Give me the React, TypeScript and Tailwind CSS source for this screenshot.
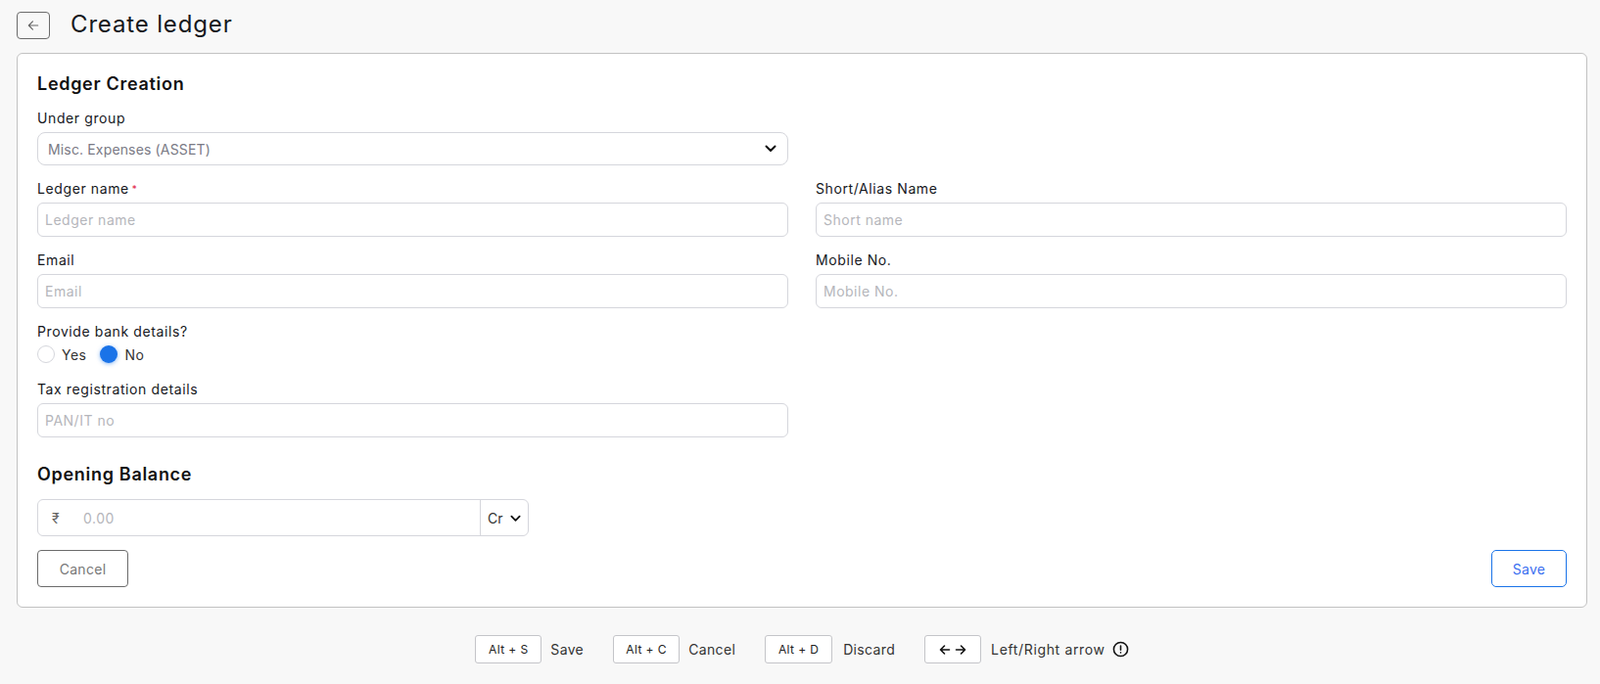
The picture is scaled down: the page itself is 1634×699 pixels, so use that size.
import React from "react";

const F = "font-['Inter','Liberation_Sans',sans-serif]";

function Label({ children, req }: { children: React.ReactNode; req?: boolean }) {
  return (
    <div className="flex h-[20px] text-[14px] leading-[20px] tracking-[0.6px] text-[#16181d]">
      {children}
      {req && <span className="ml-[3px] text-[10px] text-[#e11d48]">*</span>}
    </div>
  );
}

function Field({ label, ph, req }: { label: string; ph: string; req?: boolean }) {
  return (
    <div className="flex flex-col gap-[4px]">
      <Label req={req}>{label}</Label>
      <input
        readOnly
        placeholder={ph}
        className="h-[35px] w-full rounded-[6px] border border-[#d5d6dc] bg-white px-[7px] text-[14px] tracking-[0.5px] outline-none placeholder:text-[#b5b6bb]"
      />
    </div>
  );
}

function Chevron({ className }: { className: string }) {
  return (
    <svg viewBox="0 0 12 8" className={className} fill="none" stroke="#111" strokeWidth="2" strokeLinecap="round" strokeLinejoin="round">
      <path d="M1.5 1.5 6 6l4.5-4.5" />
    </svg>
  );
}

function Key({ k, w, label, gap }: { k: React.ReactNode; w: string; label: string; gap: string }) {
  return (
    <div className={`flex items-center ${gap}`}>
      <div className={`${w} flex h-[29px] items-center justify-center rounded-[3px] border border-[#c4c5c9] bg-white text-[12px] tracking-[0.4px] text-[#222]`}>{k}</div>
      <span className="text-[14px] tracking-[0.35px] text-[#333]">{label}</span>
    </div>
  );
}

export default function App() {
  return (
    <div className={`${F} min-h-[699px] bg-[#f8f8f8] pl-[17px] pr-[13px] pt-[12px]`}>
      <div className="flex h-[28px] items-center gap-[21px]">
        <button className="flex h-[28px] w-[34px] items-center justify-center rounded-[4px] border border-[#6b6b6b] bg-transparent">
          <svg viewBox="0 0 24 24" className="h-[14px] w-[14px]" fill="none" stroke="#666" strokeWidth="2" strokeLinecap="round" strokeLinejoin="round">
            <path d="M20 12H4M11 5l-7 7 7 7" />
          </svg>
        </button>
        <h1 className="pb-[3px] text-[24px] font-normal leading-[28px] tracking-[0.85px] text-[#16181d]">Create ledger</h1>
      </div>

      <div className="mt-[14px] rounded-[6px] border border-[#c2c2c2] bg-white pb-[20px] pl-[20px] pr-[20px] pt-[19px]">
        <h2 className="text-[18px] font-semibold leading-[24px] tracking-[0.7px] text-[#111]">Ledger Creation</h2>
        <div className="mt-[13px] flex w-[767px] flex-col gap-[4px]">
          <Label>Under group</Label>
          <div className="flex h-[34px] items-center justify-between rounded-[8px] border border-[#d5d6dc] pl-[10px] pr-[11px] text-[14px] tracking-[0.15px] text-[#7a7a85]">
            <span>Misc. Expenses (ASSET)</span>
            <Chevron className="h-[8px] w-[12px]" />
          </div>
        </div>

        <div className="mt-[14px] grid grid-cols-2 gap-x-[28px] gap-y-[14px]">
          <Field label="Ledger name" ph="Ledger name" req />
          <Field label="Short/Alias Name" ph="Short name" />
          <Field label="Email" ph="Email" />
          <Field label="Mobile No." ph="Mobile No." />
        </div>

        <div className="mt-[14px]">
          <Label>Provide bank details?</Label>
          <div className="mt-[3px] flex h-[20px] items-center text-[14px] tracking-[0.5px] text-[#333]">
            <span className="h-[18px] w-[18px] rounded-full border border-[#d5d6dc] bg-white" />
            <span className="ml-[7px]">Yes</span>
            <span className="ml-[14px] h-[18px] w-[18px] rounded-full bg-[#1a73e8] shadow-[0_1px_4px_rgba(26,115,232,0.5)]" />
            <span className="ml-[7px]">No</span>
          </div>
        </div>

        <div className="mt-[16px] w-[767px]">
          <Field label="Tax registration details" ph="PAN/IT no" />
        </div>

        <h2 className="mt-[26px] text-[18px] font-semibold leading-[24px] tracking-[0.7px] text-[#111]">Opening Balance</h2>

        <div className="mt-[13px] flex h-[38px] w-[502px] items-center rounded-[6px] border border-[#d5d6dc]">
          <span className="ml-[14px] w-[32px] text-[14px] text-[#666]">₹</span>
          <input readOnly placeholder="0.00" className="min-w-0 flex-1 bg-transparent text-[14px] tracking-[0.5px] outline-none placeholder:text-[#b5b6bb]" />
          <div className="flex h-full w-[49px] items-center border-l border-[#d5d6dc] pl-[7px] text-[14px] text-[#333]">
            <span>Cr</span>
            <Chevron className="ml-[7px] mt-[2px] h-[8px] w-[11px]" />
          </div>
        </div>

        <div className="mt-[14px] flex justify-between">
          <button className="h-[38px] w-[93px] rounded-[4px] border border-[#6b6b6b] text-[14px] tracking-[0.3px] text-[#777]">Cancel</button>
          <button className="h-[38px] w-[77px] rounded-[5px] border border-[#1a73e8] text-[14px] tracking-[0.3px] text-[#3b6ff0]">Save</button>
        </div>
      </div>

      <div className="mt-[28px] flex items-center justify-center gap-[30px]">
        <Key k="Alt + S" w="w-[68px]" label="Save" gap="gap-[9px]" />
        <Key k="Alt + C" w="w-[68px]" label="Cancel" gap="gap-[9px]" />
        <Key k="Alt + D" w="w-[69px]" label="Discard" gap="gap-[11px]" />
        <div className="flex items-center gap-[7px]">
          <div className="flex items-center gap-[10px]">
            <div className="flex h-[29px] w-[58px] items-center justify-center rounded-[3px] border border-[#c4c5c9] bg-white">
              <svg viewBox="0 0 28 12" className="h-[12px] w-[28px]" fill="none" stroke="#111" strokeWidth="1.6" strokeLinecap="round" strokeLinejoin="round">
                <path d="M10.5 6H1.5M5.5 2 1.5 6l4 4M17.5 6h9M22.5 2l4 4-4 4" />
              </svg>
            </div>
            <span className="text-[14px] tracking-[0.65px] text-[#333]">Left/Right arrow</span>
          </div>
          <svg viewBox="0 0 24 24" className="h-[17px] w-[17px]" fill="none" stroke="#111" strokeWidth="2.2" strokeLinecap="round">
            <circle cx="12" cy="12" r="10" />
            <path d="M12 7v6M12 16.8v.2" />
          </svg>
        </div>
      </div>
    </div>
  );
}
